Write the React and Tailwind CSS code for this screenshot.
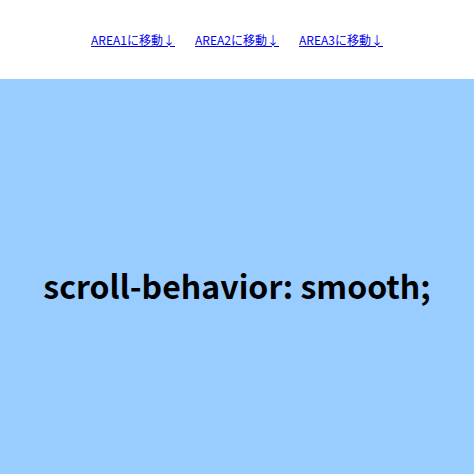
export default function App() {
  const links = ["AREA1", "AREA2", "AREA3"];
  return (
    <div className="h-screen overflow-hidden bg-white flex flex-col" style={{ fontFamily: '"Noto Sans CJK JP", "Noto Sans", sans-serif' }}>
      <nav className="h-[79px] shrink-0 flex items-center justify-center gap-5 text-[12px]">
        {links.map((l) => (
          <a key={l} href={`#${l}`} className="text-[#0000ee] underline">
            {l}に移動↓
          </a>
        ))}
      </nav>
      <section className="bg-[#99ccff] flex-1 pt-[17px] flex items-center justify-center">
        <h1 className="text-[32px] font-bold text-black">scroll-behavior: smooth;</h1>
      </section>
    </div>
  );
}
